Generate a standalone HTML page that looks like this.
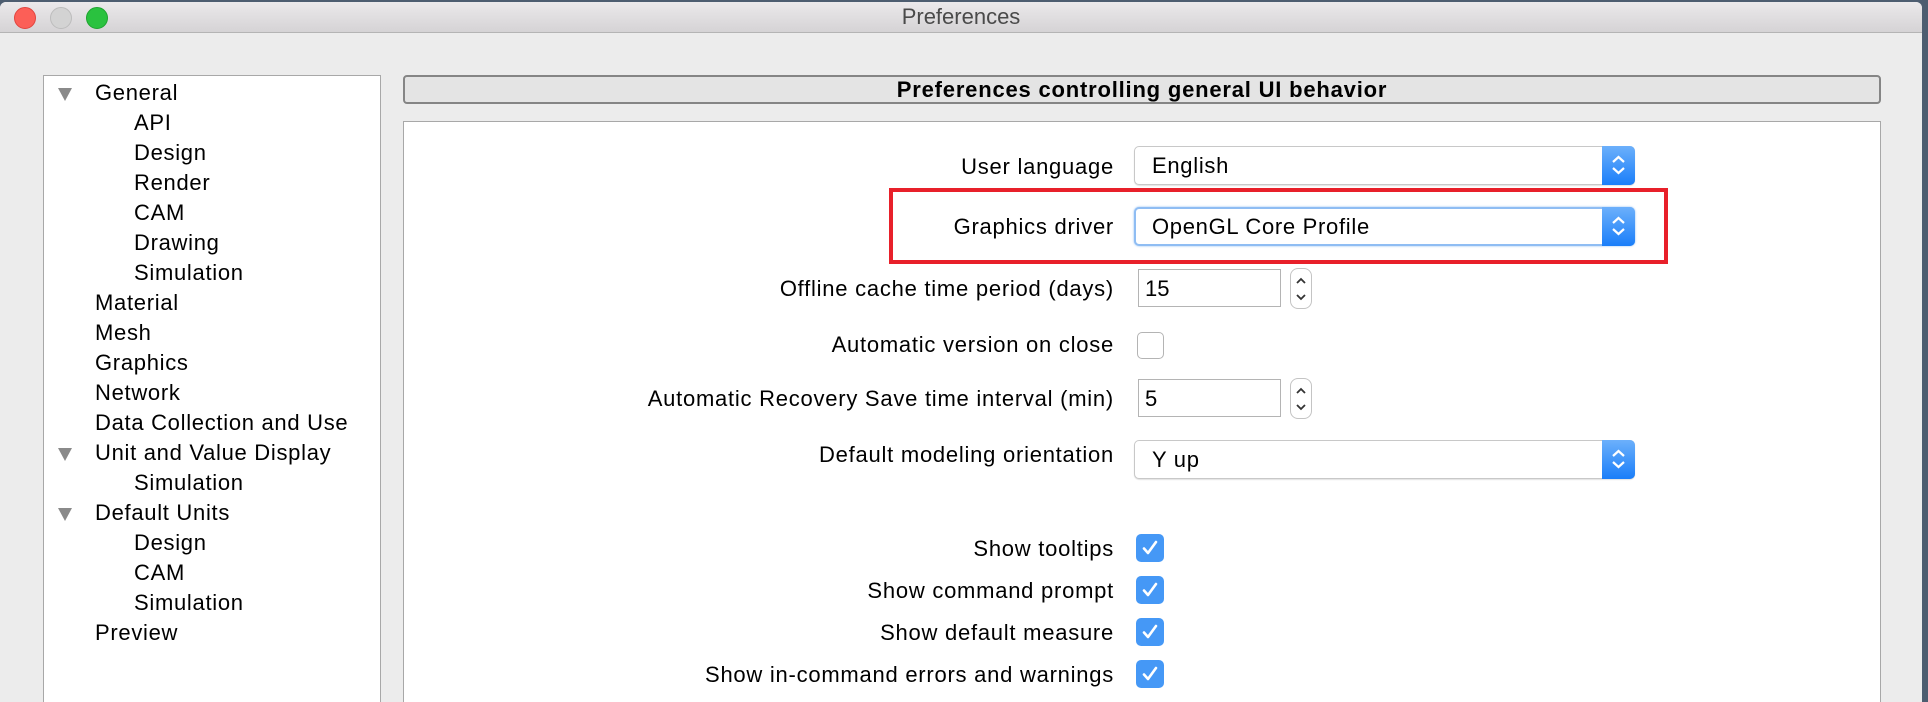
<!DOCTYPE html>
<html><head><meta charset="utf-8"><style>
*{margin:0;padding:0;box-sizing:border-box}
body{width:1928px;height:694px;overflow:hidden;background:#4d5d70;font-family:"Liberation Sans",sans-serif;color:#000;position:relative}
.win{position:absolute;left:0;top:2px;width:1922px;height:700px;background:#ececec;border-radius:6px 6px 0 0;overflow:hidden}
.title{position:absolute;left:0;top:0;width:100%;height:31px;background:linear-gradient(#ebe9eb,#d5d3d5);border-bottom:1px solid #b4b4b4;text-align:center;font-size:22px;line-height:30px;color:#4a4a4a}
.tl{position:absolute;top:5px;width:22px;height:22px;border-radius:50%}
.a{position:absolute;white-space:nowrap;font-size:22px;letter-spacing:.7px}
.lp{position:absolute;left:43px;top:73px;width:338px;height:640px;background:#fff;border:1px solid #a8a8a8}
.tri{position:absolute;width:0;height:0;border-left:7px solid transparent;border-right:7px solid transparent;border-top:13px solid #8a8a8a}
.hdr{position:absolute;left:403px;top:73px;width:1478px;height:29px;background:#e4e4e4;border:2px solid #858585;border-radius:4px;text-align:center;font-weight:bold;font-size:22px;letter-spacing:.8px;line-height:25px}
.cp{position:absolute;left:403px;top:119px;width:1478px;height:600px;background:#fff;border:1px solid #a8a8a8}
.lbl{position:absolute;right:808px;font-size:22px;letter-spacing:.75px;line-height:30px;white-space:nowrap}
.cb{position:absolute;left:1134px;width:501px;height:39px;border:1px solid #c8c8c8;border-radius:5px;background:#fff;box-shadow:0 1px 1px rgba(0,0,0,.12)}
.cb span{position:absolute;left:17px;top:0;line-height:37px;font-size:22px;letter-spacing:.7px}
.btn{position:absolute;right:-1px;top:-1px;width:33px;height:39px;border-radius:0 5px 5px 0;background:linear-gradient(#6cb0fb,#1a7ef9)}
.btn svg{position:absolute;left:7px;top:8px}
.sp{position:absolute;left:1138px;width:143px;height:38px;border:1px solid #b4b4b4;background:#fff}
.sp span{position:absolute;left:6px;line-height:38px;font-size:22px}
.st{position:absolute;left:1290px;width:22px;height:41px;border:1px solid #c4c4c4;border-radius:8px;background:#fff}
.st svg{position:absolute;left:3px;top:7px}
.ck{position:absolute;left:1136px;width:28px;height:28px;border-radius:5px;background:#4598f6}
.ck svg{position:absolute;left:5px;top:5px}
.box{position:absolute;left:1137px;top:330px;width:27px;height:27px;border:1px solid #b4b4b4;border-radius:5px;background:#fff}
</style></head><body>
<div class="win">
<div class="title">Preferences</div>
<div class="tl" style="left:14px;background:#fc5f57;border:1px solid #e1443e"></div>
<div class="tl" style="left:50px;background:#d3d3d3;border:1px solid #bcbcbc"></div>
<div class="tl" style="left:86px;background:#2ac23f;border:1px solid #1ea32f"></div>

<div class="lp">
<div class="tri" style="left:14px;top:12px"></div>
<div class="tri" style="left:14px;top:372px"></div>
<div class="tri" style="left:14px;top:432px"></div>
</div>
<div class="a" style="left:95px;top:76px;line-height:30px">General</div>
<div class="a" style="left:134px;top:106px;line-height:30px">API</div>
<div class="a" style="left:134px;top:136px;line-height:30px">Design</div>
<div class="a" style="left:134px;top:166px;line-height:30px">Render</div>
<div class="a" style="left:134px;top:196px;line-height:30px">CAM</div>
<div class="a" style="left:134px;top:226px;line-height:30px">Drawing</div>
<div class="a" style="left:134px;top:256px;line-height:30px">Simulation</div>
<div class="a" style="left:95px;top:286px;line-height:30px">Material</div>
<div class="a" style="left:95px;top:316px;line-height:30px">Mesh</div>
<div class="a" style="left:95px;top:346px;line-height:30px">Graphics</div>
<div class="a" style="left:95px;top:376px;line-height:30px">Network</div>
<div class="a" style="left:95px;top:406px;line-height:30px">Data Collection and Use</div>
<div class="a" style="left:95px;top:436px;line-height:30px">Unit and Value Display</div>
<div class="a" style="left:134px;top:466px;line-height:30px">Simulation</div>
<div class="a" style="left:95px;top:496px;line-height:30px">Default Units</div>
<div class="a" style="left:134px;top:526px;line-height:30px">Design</div>
<div class="a" style="left:134px;top:556px;line-height:30px">CAM</div>
<div class="a" style="left:134px;top:586px;line-height:30px">Simulation</div>
<div class="a" style="left:95px;top:616px;line-height:30px">Preview</div>

<div class="hdr">Preferences controlling general UI behavior</div>
<div class="cp"></div>

<div class="lbl" style="top:150px">User language</div>
<div class="cb" style="top:144px"><span>English</span><div class="btn"><svg width="19" height="22" viewBox="0 0 19 22"><path d="M4 8 9.5 3 15 8M4 14 9.5 19 15 14" fill="none" stroke="#fff" stroke-width="2.2"/></svg></div></div>

<div style="position:absolute;left:889px;top:186px;width:779px;height:76px;border:4px solid #e8202a"></div>
<div class="lbl" style="top:210px">Graphics driver</div>
<div class="cb" style="top:205px;border:2px solid #8fbdf3;box-shadow:0 0 2px #8fbdf3"><span style="left:16px;top:-1px">OpenGL Core Profile</span><div class="btn" style="top:-2px;right:-2px"><svg width="19" height="22" viewBox="0 0 19 22"><path d="M4 8 9.5 3 15 8M4 14 9.5 19 15 14" fill="none" stroke="#fff" stroke-width="2.2"/></svg></div></div>

<div class="lbl" style="top:272px">Offline cache time period (days)</div>
<div class="sp" style="top:267px"><span>15</span></div>
<div class="st" style="top:266px"><svg width="14" height="26" viewBox="0 0 14 26"><path d="M3 7 7 3 11 7M3 19 7 23 11 19" fill="none" stroke="#333" stroke-width="1.8"/></svg></div>

<div class="lbl" style="top:328px">Automatic version on close</div>
<div class="box"></div>

<div class="lbl" style="top:382px">Automatic Recovery Save time interval (min)</div>
<div class="sp" style="top:377px"><span>5</span></div>
<div class="st" style="top:376px"><svg width="14" height="26" viewBox="0 0 14 26"><path d="M3 7 7 3 11 7M3 19 7 23 11 19" fill="none" stroke="#333" stroke-width="1.8"/></svg></div>

<div class="lbl" style="top:438px">Default modeling orientation</div>
<div class="cb" style="top:438px"><span>Y up</span><div class="btn"><svg width="19" height="22" viewBox="0 0 19 22"><path d="M4 8 9.5 3 15 8M4 14 9.5 19 15 14" fill="none" stroke="#fff" stroke-width="2.2"/></svg></div></div>

<div class="lbl" style="top:532px">Show tooltips</div>
<div class="ck" style="top:532px"><svg width="18" height="18" viewBox="0 0 18 18"><path d="M3 9.5 7 14 15 3" fill="none" stroke="#fff" stroke-width="2.6" stroke-linecap="round" stroke-linejoin="round"/></svg></div>
<div class="lbl" style="top:574px">Show command prompt</div>
<div class="ck" style="top:574px"><svg width="18" height="18" viewBox="0 0 18 18"><path d="M3 9.5 7 14 15 3" fill="none" stroke="#fff" stroke-width="2.6" stroke-linecap="round" stroke-linejoin="round"/></svg></div>
<div class="lbl" style="top:616px">Show default measure</div>
<div class="ck" style="top:616px"><svg width="18" height="18" viewBox="0 0 18 18"><path d="M3 9.5 7 14 15 3" fill="none" stroke="#fff" stroke-width="2.6" stroke-linecap="round" stroke-linejoin="round"/></svg></div>
<div class="lbl" style="top:658px">Show in-command errors and warnings</div>
<div class="ck" style="top:658px"><svg width="18" height="18" viewBox="0 0 18 18"><path d="M3 9.5 7 14 15 3" fill="none" stroke="#fff" stroke-width="2.6" stroke-linecap="round" stroke-linejoin="round"/></svg></div>
</div>
</body></html>
